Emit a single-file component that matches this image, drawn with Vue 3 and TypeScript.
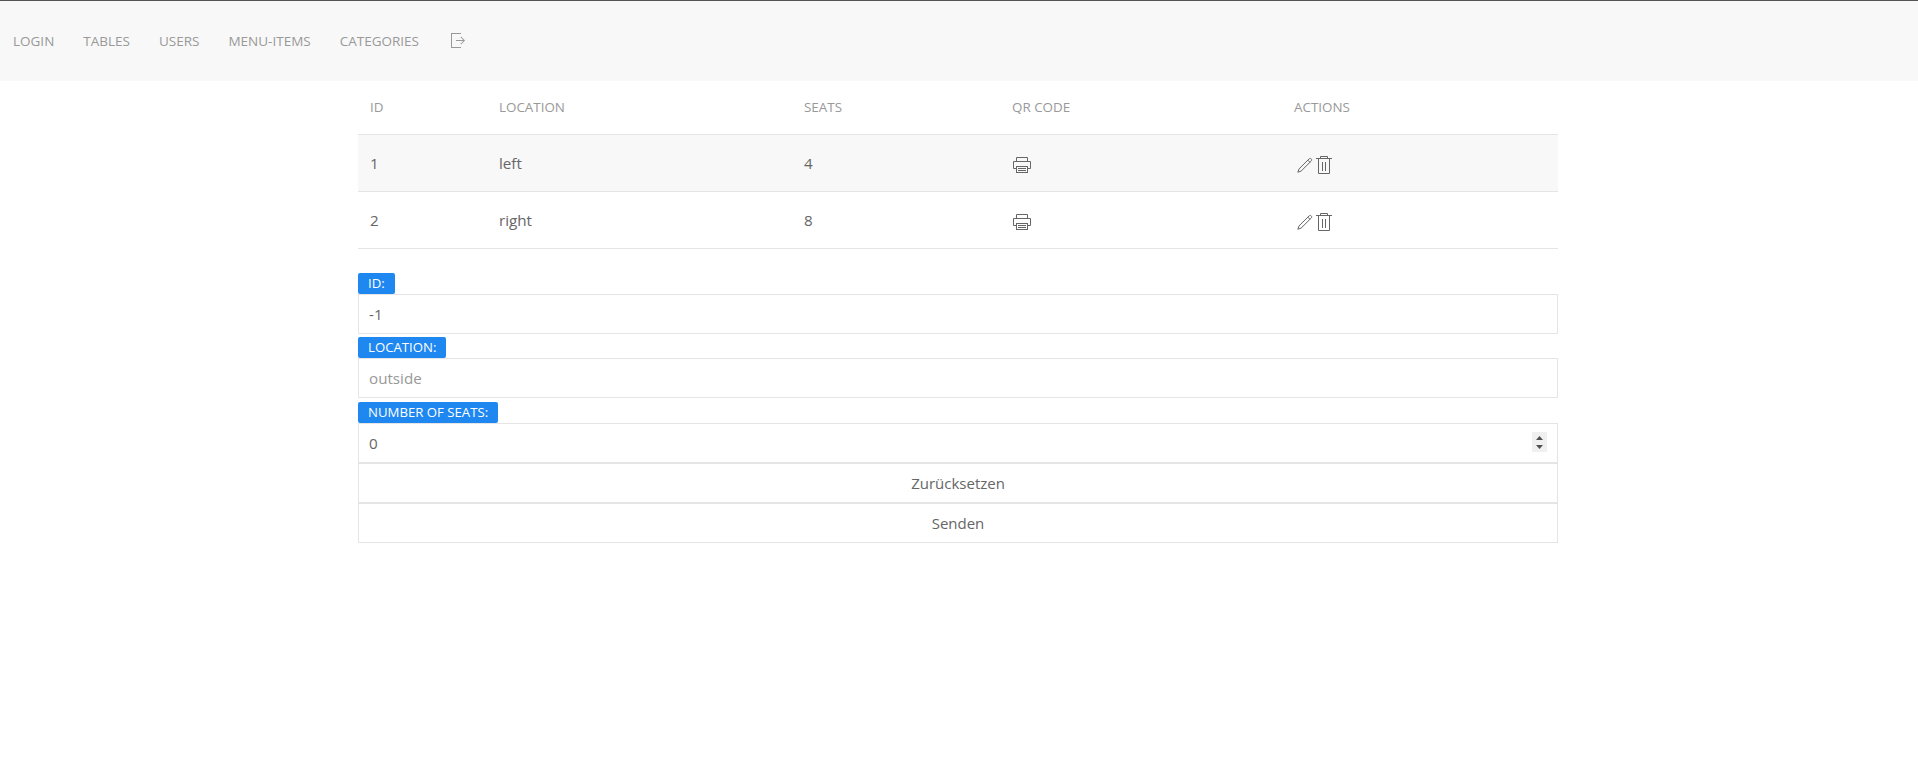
<script setup lang="ts">
const links: string[] = ['Login', 'Tables', 'Users', 'Menu-Items', 'Categories']
const rows = [
  { id: 1, location: 'left', seats: 4 },
  { id: 2, location: 'right', seats: 8 },
]
</script>

<template>
  <div class="page">
    <nav class="navbar">
      <a v-for="l in links" :key="l" class="nav-link" href="#">{{ l }}</a>
      <a class="nav-icon" href="#" aria-label="Logout">
        <svg width="20" height="20" viewBox="0 0 20 20" fill="#999">
          <polygon points="13.1 13.4 12.5 12.8 15.28 10 8 10 8 9 15.28 9 12.5 6.2 13.1 5.6 17 9.5" />
          <polygon points="13 2 3 2 3 17 13 17 13 16 4 16 4 3 13 3" />
        </svg>
      </a>
    </nav>
    <main class="container">
      <table class="table">
        <colgroup>
          <col class="c1" /><col class="c2" /><col class="c3" /><col class="c4" /><col />
        </colgroup>
        <thead>
          <tr><th>ID</th><th>Location</th><th>Seats</th><th>QR Code</th><th>Actions</th></tr>
        </thead>
        <tbody>
          <tr v-for="r in rows" :key="r.id">
            <td>{{ r.id }}</td>
            <td>{{ r.location }}</td>
            <td>{{ r.seats }}</td>
            <td>
              <svg class="icon" width="20" height="20" viewBox="0 0 20 20">
                <polyline fill="none" stroke="#666" points="4.5 13.5 1.5 13.5 1.5 6.5 18.5 6.5 18.5 13.5 15.5 13.5" />
                <polyline fill="none" stroke="#666" points="15.5 6.5 15.5 2.5 4.5 2.5 4.5 6.5" />
                <rect fill="none" stroke="#666" width="11" height="6" x="4.5" y="11.5" />
                <rect fill="#666" width="8" height="1" x="6" y="13" />
                <rect fill="#666" width="8" height="1" x="6" y="15" />
              </svg>
            </td>
            <td>
              <div class="actions">
                <svg class="icon" width="20" height="20" viewBox="0 0 20 20">
                  <path fill="none" stroke="#666" d="M17.25,6.01 L7.12,16.1 L3.82,17.2 L5.02,13.9 L15.12,3.88 C15.71,3.29 16.66,3.29 17.25,3.88 C17.83,4.47 17.83,5.42 17.25,6.01 L17.25,6.01 Z" />
                  <path fill="none" stroke="#666" d="M15.98,7.268 L13.851,5.148" />
                </svg>
                <svg class="icon" width="20" height="20" viewBox="0 0 20 20">
                  <polyline fill="none" stroke="#666" points="6.5 3 6.5 1.5 13.5 1.5 13.5 3" />
                  <polyline fill="none" stroke="#666" points="4.5 4 4.5 18.5 15.5 18.5 15.5 4" />
                  <rect fill="#666" x="8" y="7" width="1" height="9" />
                  <rect fill="#666" x="11" y="7" width="1" height="9" />
                  <rect fill="#666" x="2" y="3" width="16" height="1" />
                </svg>
              </div>
            </td>
          </tr>
        </tbody>
      </table>

      <form class="form" @submit.prevent>
        <label class="label" for="f-id">ID:</label>
        <input id="f-id" class="input" type="text" value="-1" />
        <label class="label l2" for="f-loc">Location:</label>
        <input id="f-loc" class="input" type="text" placeholder="outside" />
        <label class="label l3" for="f-seats">Number of Seats:</label>
        <div class="number">
          <input id="f-seats" class="input no-spin" type="number" value="0" />
          <div class="spinner" aria-hidden="true">
            <svg width="15" height="20" viewBox="0 0 15 20" fill="#505050">
              <polygon points="7.5 4 11 8 4 8" />
              <polygon points="4 13 11 13 7.5 17" />
            </svg>
          </div>
        </div>
        <button class="btn" type="reset">Zurücksetzen</button>
        <button class="btn" type="submit">Senden</button>
      </form>
    </main>
  </div>
</template>

<style>
html, body { margin: 0; background: #fff; }
</style>

<style scoped>
.page {
  min-height: 772px;
  box-sizing: border-box;
  border-top: 1px solid #555;
  font-family: "Open Sans", "Noto Sans", sans-serif;
  color: #666;
  font-size: 15.2px;
}
.navbar {
  height: 80px;
  background: #f8f8f8;
  display: flex;
  align-items: center;
  gap: 29px;
  padding-left: 13px;
}
.nav-link {
  font-size: 13.5px;
  text-transform: uppercase;
  color: #999;
  text-decoration: none;
}
.nav-icon { display: flex; margin-top: -1px; }
.container { width: 1200px; margin-left: 358px; }
.table { width: 100%; border-collapse: collapse; table-layout: fixed; }
.c1 { width: 129px; }
.c2 { width: 305px; }
.c3 { width: 208px; }
.c4 { width: 282px; }
th {
  height: 53px;
  box-sizing: border-box;
  padding: 0 12px;
  text-align: left;
  font-weight: 400;
  font-size: 13.4px;
  text-transform: uppercase;
  color: #999;
  border-bottom: 1px solid #e5e5e5;
}
td {
  height: 57px;
  box-sizing: border-box;
  padding: 0 12px;
  border-bottom: 1px solid #e5e5e5;
}
tbody tr:first-child { background: #f8f8f8; }
.icon { display: block; position: relative; top: 2px; }
.actions { display: flex; }
.form { display: flex; flex-direction: column; align-items: flex-start; margin-top: 24px; }
.label {
  background: #1e87f0;
  color: #fff;
  font-size: 13.2px;
  line-height: 21px;
  height: 21px;
  padding: 0 10px;
  border-radius: 2px;
  text-transform: uppercase;
}
.l2 { margin-top: 3px; }
.l3 { margin-top: 4px; }
.number { position: relative; width: 100%; }
.input {
  display: block;
  width: 100%;
  height: 40px;
  box-sizing: border-box;
  border: 1px solid #e5e5e5;
  padding: 0 10px;
  font: inherit;
  color: #666;
  background: #fff;
  outline: none;
  margin: 0;
}
.input::placeholder { color: #999; opacity: 1; }
.no-spin { appearance: textfield; }
.no-spin::-webkit-inner-spin-button { appearance: none; margin: 0; }
.spinner {
  position: absolute;
  right: 11px;
  top: 9px;
  width: 15px;
  height: 20px;
  background: #f0f0f0;
}
.spinner svg { display: block; }
.btn {
  width: 100%;
  height: 40px;
  box-sizing: border-box;
  border: 1px solid #e5e5e5;
  background: #fff;
  font: inherit;
  font-size: 15px;
  color: #666;
  margin: 0;
  padding: 0;
}
</style>
